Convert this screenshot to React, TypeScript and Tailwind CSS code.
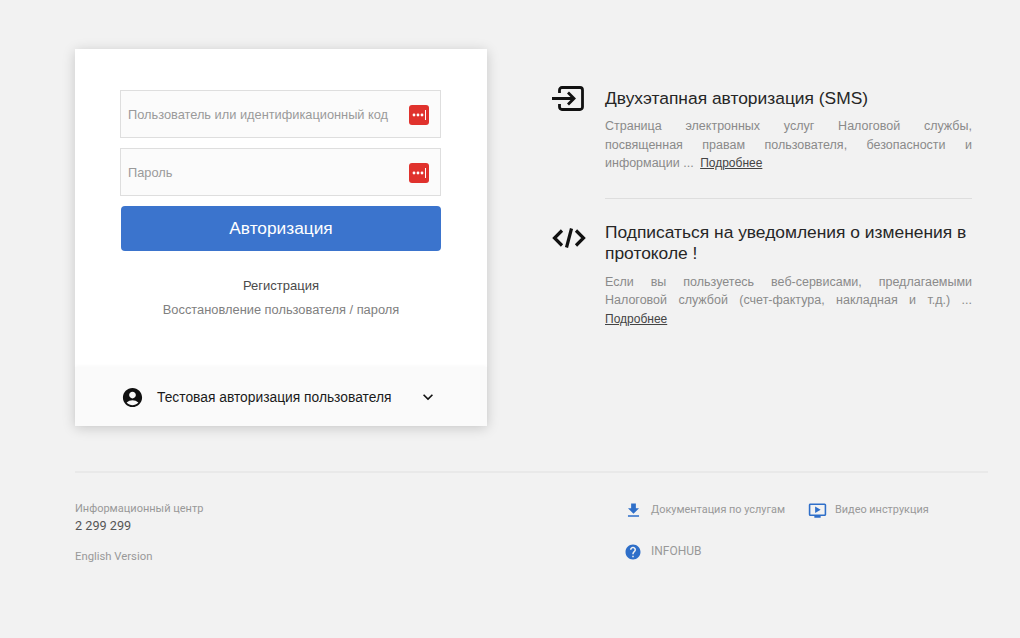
import React from 'react';
import { MdAccountCircle, MdFileDownload, MdHelp, MdKeyboardArrowDown, MdOndemandVideo } from 'react-icons/md';

const sans = 'font-["Liberation_Sans",Arial,sans-serif]';
const roboto = 'font-["Roboto","Liberation_Sans",sans-serif]';

function KeyBadge() {
  return (
    <svg width="20" height="20" viewBox="0 0 20 20" className="shrink-0">
      <rect width="20" height="20" rx="3" fill="#e0322d" />
      <circle cx="5" cy="10" r="1.4" fill="#fff" />
      <circle cx="9" cy="10" r="1.4" fill="#fff" />
      <circle cx="13" cy="10" r="1.4" fill="#fff" />
      <rect x="16" y="5" width="1" height="10" fill="#fff" />
    </svg>
  );
}

function Field({ placeholder }: { placeholder: string }) {
  return (
    <div className="flex h-[48px] w-[321px] items-center justify-between border border-[#dedede] bg-[#fbfbfb] pt-[1px] pl-[7px] pr-[11px]">
      <span className="pt-[1px] text-[12.8px] text-[#9a9a9a]">{placeholder}</span>
      <KeyBadge />
    </div>
  );
}

function LoginCard() {
  return (
    <div className="w-[412px] shrink-0 bg-white shadow-[0_2px_12px_rgba(0,0,0,0.18)]">
      <div className="flex h-[318px] flex-col pt-[41px] pl-[45px]">
        <div className="flex flex-col gap-[10px]">
          <Field placeholder="Пользователь или идентификационный код" />
          <Field placeholder="Пароль" />
        </div>
        <button className="mt-[10px] ml-[1px] h-[45px] w-[320px] rounded-[4px] bg-[#3b74cd] text-[17.300px] text-white">
          Авторизация
        </button>
        <div className="mt-[27px] w-[322px] text-center text-[13px] leading-[16px] text-[#4a4a4a]">Регистрация</div>
        <div className="mt-[8px] w-[322px] text-center text-[12.850px] leading-[16px] text-[#808080]">
          Восстановление пользователя / пароля
        </div>
      </div>
      <div className="flex h-[59px] items-center bg-[#fafafa] pt-[2px] pl-[46px] shadow-[0_-1px_4px_rgba(0,0,0,0.03)]">
        <MdAccountCircle className="text-[#111]" size={23} />
        <span className="ml-[13px] w-[262px] pt-[1px] text-[13.800px] text-[#1a1a1a]">
          Тестовая авторизация пользователя
        </span>
        <MdKeyboardArrowDown className="-mt-[1px] -ml-[1px] text-[#111]" size={20} />
      </div>
    </div>
  );
}

function LoginIcon() {
  return (
    <svg width="32" height="25" viewBox="0 0 32 25" fill="none" stroke="#111" strokeWidth="2.800" className="shrink-0">
      <path d="M7.500 7V4A2.500 2.500 0 0 1 10 1.500H28A2.500 2.500 0 0 1 30.500 4V21A2.500 2.500 0 0 1 28 23.500H10A2.500 2.500 0 0 1 7.500 21V18" />
      <path d="M0 12.500H22M16 6.500L22 12.500L16 18.500" />
    </svg>
  );
}

function CodeIcon() {
  return (
    <svg width="34" height="20" viewBox="0 0 34 20" fill="none" stroke="#111" strokeWidth="3.200" className="shrink-0">
      <path d="M10 2.500L2.500 10L10 17.500M24 2.500L31.500 10L24 17.500M19.500 0.500L14.500 19.500" />
    </svg>
  );
}

function InfoColumn() {
  return (
    <div className="ml-[65px] w-[420px] pt-[36px]">
      <div className="flex items-start">
        <div className="w-[53px] pt-[1px]">
          <LoginIcon />
        </div>
        <div className="w-[367px]">
          <h3 className="text-[17.400px] leading-[26px] text-[#262626]">Двухэтапная авторизация (SMS)</h3>
          <p className="mt-[6px] text-justify text-[12.500px] leading-[18.500px] text-[#8a8a8a]">
            Страница электронных услуг Налоговой службы, посвященная правам пользователя, безопасности и информации ...{' '}
            <a className="ml-[3px] text-[12px] text-[#444] underline">Подробнее</a>
          </p>
        </div>
      </div>
      <div className="mt-[25px] ml-[53px] h-px bg-[#dedede]" />
      <div className="mt-[23px] flex items-start">
        <div className="w-[53px] pt-[6px]">
          <CodeIcon />
        </div>
        <div className="w-[367px]">
          <h3 className="text-[17.400px] leading-[21px] text-[#262626]">
            Подписаться на уведомления о изменения в протоколе !
          </h3>
          <p className="mt-[9px] text-justify text-[12.500px] leading-[18.500px] text-[#8a8a8a]">
            Если вы пользуетесь веб-сервисами, предлагаемыми Налоговой службой (счет-фактура, накладная и т.д.) ...{' '}
            <a className="text-[12px] text-[#444] underline">Подробнее</a>
          </p>
        </div>
      </div>
    </div>
  );
}

function Footer() {
  return (
    <div className={`mt-[45px] w-[913px] border-t-2 border-[#e9e9e9] pt-[28px] ${roboto}`}>
      <div className="flex">
        <div className="w-[548px]">
          <div className="text-[11px] leading-[15px] text-[#999]">Информационный центр</div>
          <div className="mt-[1px] text-[12.700px] leading-[18px] text-[#555]">2 299 299</div>
          <div className="mt-[14px] text-[11.300px] leading-[15px] text-[#999]">English Version</div>
        </div>
        <div className="-mt-[1px] flex flex-col gap-[22px] text-[10.900px] leading-[16px] text-[#999]">
          <div className="flex h-[20px] items-center">
            <span className="flex w-[20px] justify-center">
              <MdFileDownload className="text-[#2f6fc9]" size={19} />
            </span>
            <span className="ml-[8px] w-[156px]">Документация по услугам</span>
            <span className="flex w-[20px] justify-center">
              <MdOndemandVideo className="text-[#2f6fc9]" size={19} />
            </span>
            <span className="ml-[8px]">Видео инструкция</span>
          </div>
          <div className="flex h-[20px] items-center">
            <span className="flex w-[20px] justify-center">
              <MdHelp className="text-[#2f6fc9]" size={18} />
            </span>
            <span className="ml-[8px] -mt-[2px] text-[12px]">INFOHUB</span>
          </div>
        </div>
      </div>
    </div>
  );
}

export default function App() {
  return (
    <div className={`min-h-[638px] bg-[#f2f2f2] pt-[49px] pl-[75px] ${sans}`}>
      <div className="flex">
        <LoginCard />
        <InfoColumn />
      </div>
      <Footer />
    </div>
  );
}
